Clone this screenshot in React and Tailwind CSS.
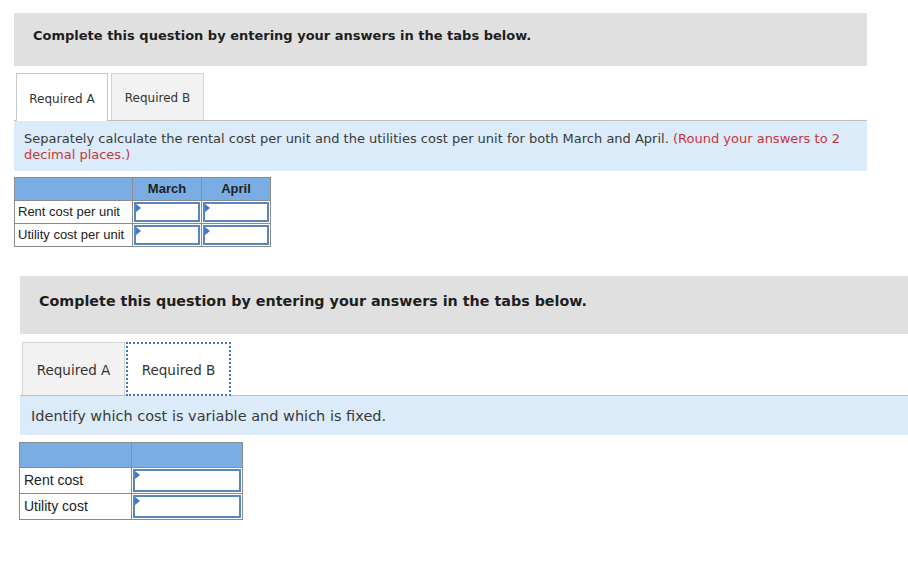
import React from 'react'

const verdana = { fontFamily: '"DejaVu Sans", Verdana, sans-serif' }
const arial = { fontFamily: '"Liberation Sans", Arial, sans-serif' }

function Marker() {
  // small blue triangle in the top-left corner of an answer field
  return (
    <span className="absolute left-0 top-0 h-0 w-0 border-y-[4px] border-l-[5px] border-y-transparent border-l-[#3b7bc8]" />
  )
}

function InputCell({ boxH }) {
  return (
    <td className="border border-[#8c8c8c] bg-white p-0 align-top">
      <div className={`relative mx-px my-px box-border ${boxH} border-2 border-[#5a86c0] bg-white`}>
        <Marker />
      </div>
    </td>
  )
}

function TopPart() {
  return (
    <div className="ml-[14px] w-[853px]" style={verdana}>
      {/* Instruction banner */}
      <div className="h-[53px] bg-[#e0e0e0] pl-[19px] pt-[15px] text-[13px] font-bold leading-4 text-[#1e1e1e]">
        Complete this question by entering your answers in the tabs below.
      </div>

      {/* Tabs */}
      <div className="mt-[8px] flex h-[47px] items-end border-b border-[#bfbfbf]">
        <div className="relative -mb-px ml-[2px] flex h-[48px] w-[92px] items-center justify-center border border-b-0 border-[#c9c9c9] bg-white pt-[2px] text-[12px] text-[#333]">
          Required A
        </div>
        <div className="ml-[3px] flex h-[47px] w-[93px] items-center justify-center border border-b-0 border-[#d4d4d4] bg-[#f2f2f2] pt-[2px] text-[12px] text-[#333]">
          Required B
        </div>
      </div>

      {/* Question text */}
      <div className="h-[50px] bg-[#dbebf9] px-[10px] pt-[10px] text-[13px] leading-4 text-[#3a3a3a]">
        Separately calculate the rental cost per unit and the utilities cost per unit for both March and April.{' '}
        <span className="text-[#c8363d]">(Round your answers to 2 decimal places.)</span>
      </div>

      {/* Answer table */}
      <table className="mt-[6px] border-collapse text-[13px] text-[#222]" style={arial}>
        <tbody>
          <tr className="h-[23px] bg-[#79ade3]">
            <th className="w-[118px] border border-[#8c8c8c]" />
            <th className="w-[69px] border border-[#8c8c8c] text-[13px] font-bold">March</th>
            <th className="w-[69px] border border-[#8c8c8c] text-[13px] font-bold">April</th>
          </tr>
          <tr className="h-[23px]">
            <td className="border border-[#8c8c8c] pl-[3px] text-left">Rent cost per unit</td>
            <InputCell boxH="h-[20px]" />
            <InputCell boxH="h-[20px]" />
          </tr>
          <tr className="h-[23px]">
            <td className="border border-[#8c8c8c] pl-[3px] text-left">Utility cost per unit</td>
            <InputCell boxH="h-[20px]" />
            <InputCell boxH="h-[20px]" />
          </tr>
        </tbody>
      </table>
    </div>
  )
}

function BottomPart() {
  return (
    <div className="ml-[20px] mt-[29px] w-[888px]" style={verdana}>
      <div className="h-[58px] bg-[#e0e0e0] pl-[19px] pt-[16px] text-[14.3px] font-bold leading-[18px] text-[#1e1e1e]">
        Complete this question by entering your answers in the tabs below.
      </div>

      <div className="mt-[9px] flex h-[53px] items-end border-b border-[#bfbfbf]">
        <div className="ml-[2px] flex h-[53px] w-[103px] items-center justify-center border border-b-0 border-[#d4d4d4] bg-[#f2f2f2] pt-[2px] text-[13.5px] text-[#333]">
          Required A
        </div>
        <div className="relative -mb-px ml-px flex h-[54px] w-[105px] items-center justify-center border-2 border-dotted border-[#3d78c6] bg-white pt-[2px] text-[13.5px] text-[#333]">
          Required B
        </div>
      </div>

      <div className="h-[39px] bg-[#dbebf9] pl-[11px] pt-[11px] text-[14.5px] leading-[18px] text-[#3a3a3a]">
        Identify which cost is variable and which is fixed.
      </div>

      <table className="-ml-px mt-[7px] border-collapse text-[14px] text-[#222]" style={arial}>
        <tbody>
          <tr className="h-[25px] bg-[#79ade3]">
            <th className="w-[112px] border border-[#8c8c8c]" />
            <th className="w-[111px] border border-[#8c8c8c]" />
          </tr>
          <tr className="h-[26px]">
            <td className="border border-[#8c8c8c] pl-[4px] text-left">Rent cost</td>
            <InputCell boxH="h-[23px]" />
          </tr>
          <tr className="h-[26px]">
            <td className="border border-[#8c8c8c] pl-[4px] text-left">Utility cost</td>
            <InputCell boxH="h-[23px]" />
          </tr>
        </tbody>
      </table>
    </div>
  )
}

export default function App() {
  return (
    <div className="h-[561px] w-[908px] overflow-hidden bg-white pt-[13px]">
      <TopPart />
      <BottomPart />
    </div>
  )
}
